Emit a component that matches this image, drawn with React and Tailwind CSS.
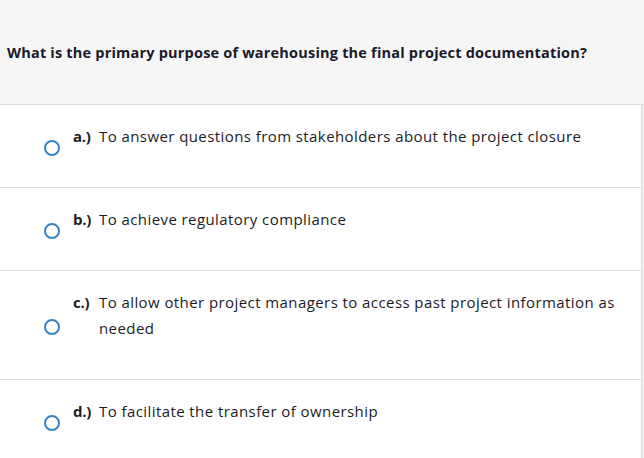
import React from 'react';

const options = [
  { key: 'a.)', text: 'To answer questions from stakeholders about the project closure' },
  { key: 'b.)', text: 'To achieve regulatory compliance' },
  { key: 'c.)', text: 'To allow other project managers to access past project information as needed' },
  { key: 'd.)', text: 'To facilitate the transfer of ownership' },
];

function Option({ label, text }) {
  return (
    <div className="border-b border-[#dedede] pt-[18px] pb-[14px]">
      <div className="flex items-center">
        <div className="w-[44px] shrink-0" />
        <div className="w-[16px] h-[16px] rounded-full border-2 border-[#3a84c6] shrink-0" />
        <div className="flex items-start pb-[24px] pl-[13px] pr-[16px]">
          <span className="font-bold w-[26px] shrink-0 text-[15px] leading-[26px] tracking-[-0.3px]">{label}</span>
          <span className="text-[15px] leading-[26px] tracking-[0.42px]">{text}</span>
        </div>
      </div>
    </div>
  );
}

export default function App() {
  return (
    <div
      className="w-[644px] h-[458px] overflow-hidden bg-white text-[#1b1b26]"
      style={{ fontFamily: '"Open Sans", "Liberation Sans", sans-serif' }}
    >
      <div className="h-[105px] bg-[#f6f6f6] border-b border-[#dedede] flex items-center pl-[7px] pt-[2px]">
        <h1 className="font-bold text-[14.5px] text-[#1a1a2a] tracking-[0.2px]">
          What is the primary purpose of warehousing the final project documentation?
        </h1>
      </div>
      <div className="flex">
        <div className="flex-1">
          {options.map((o) => (
            <Option key={o.key} label={o.key} text={o.text} />
          ))}
        </div>
        <div className="w-[3px] bg-[#ececec] border-l border-[#e2e2e2]" />
      </div>
    </div>
  );
}
